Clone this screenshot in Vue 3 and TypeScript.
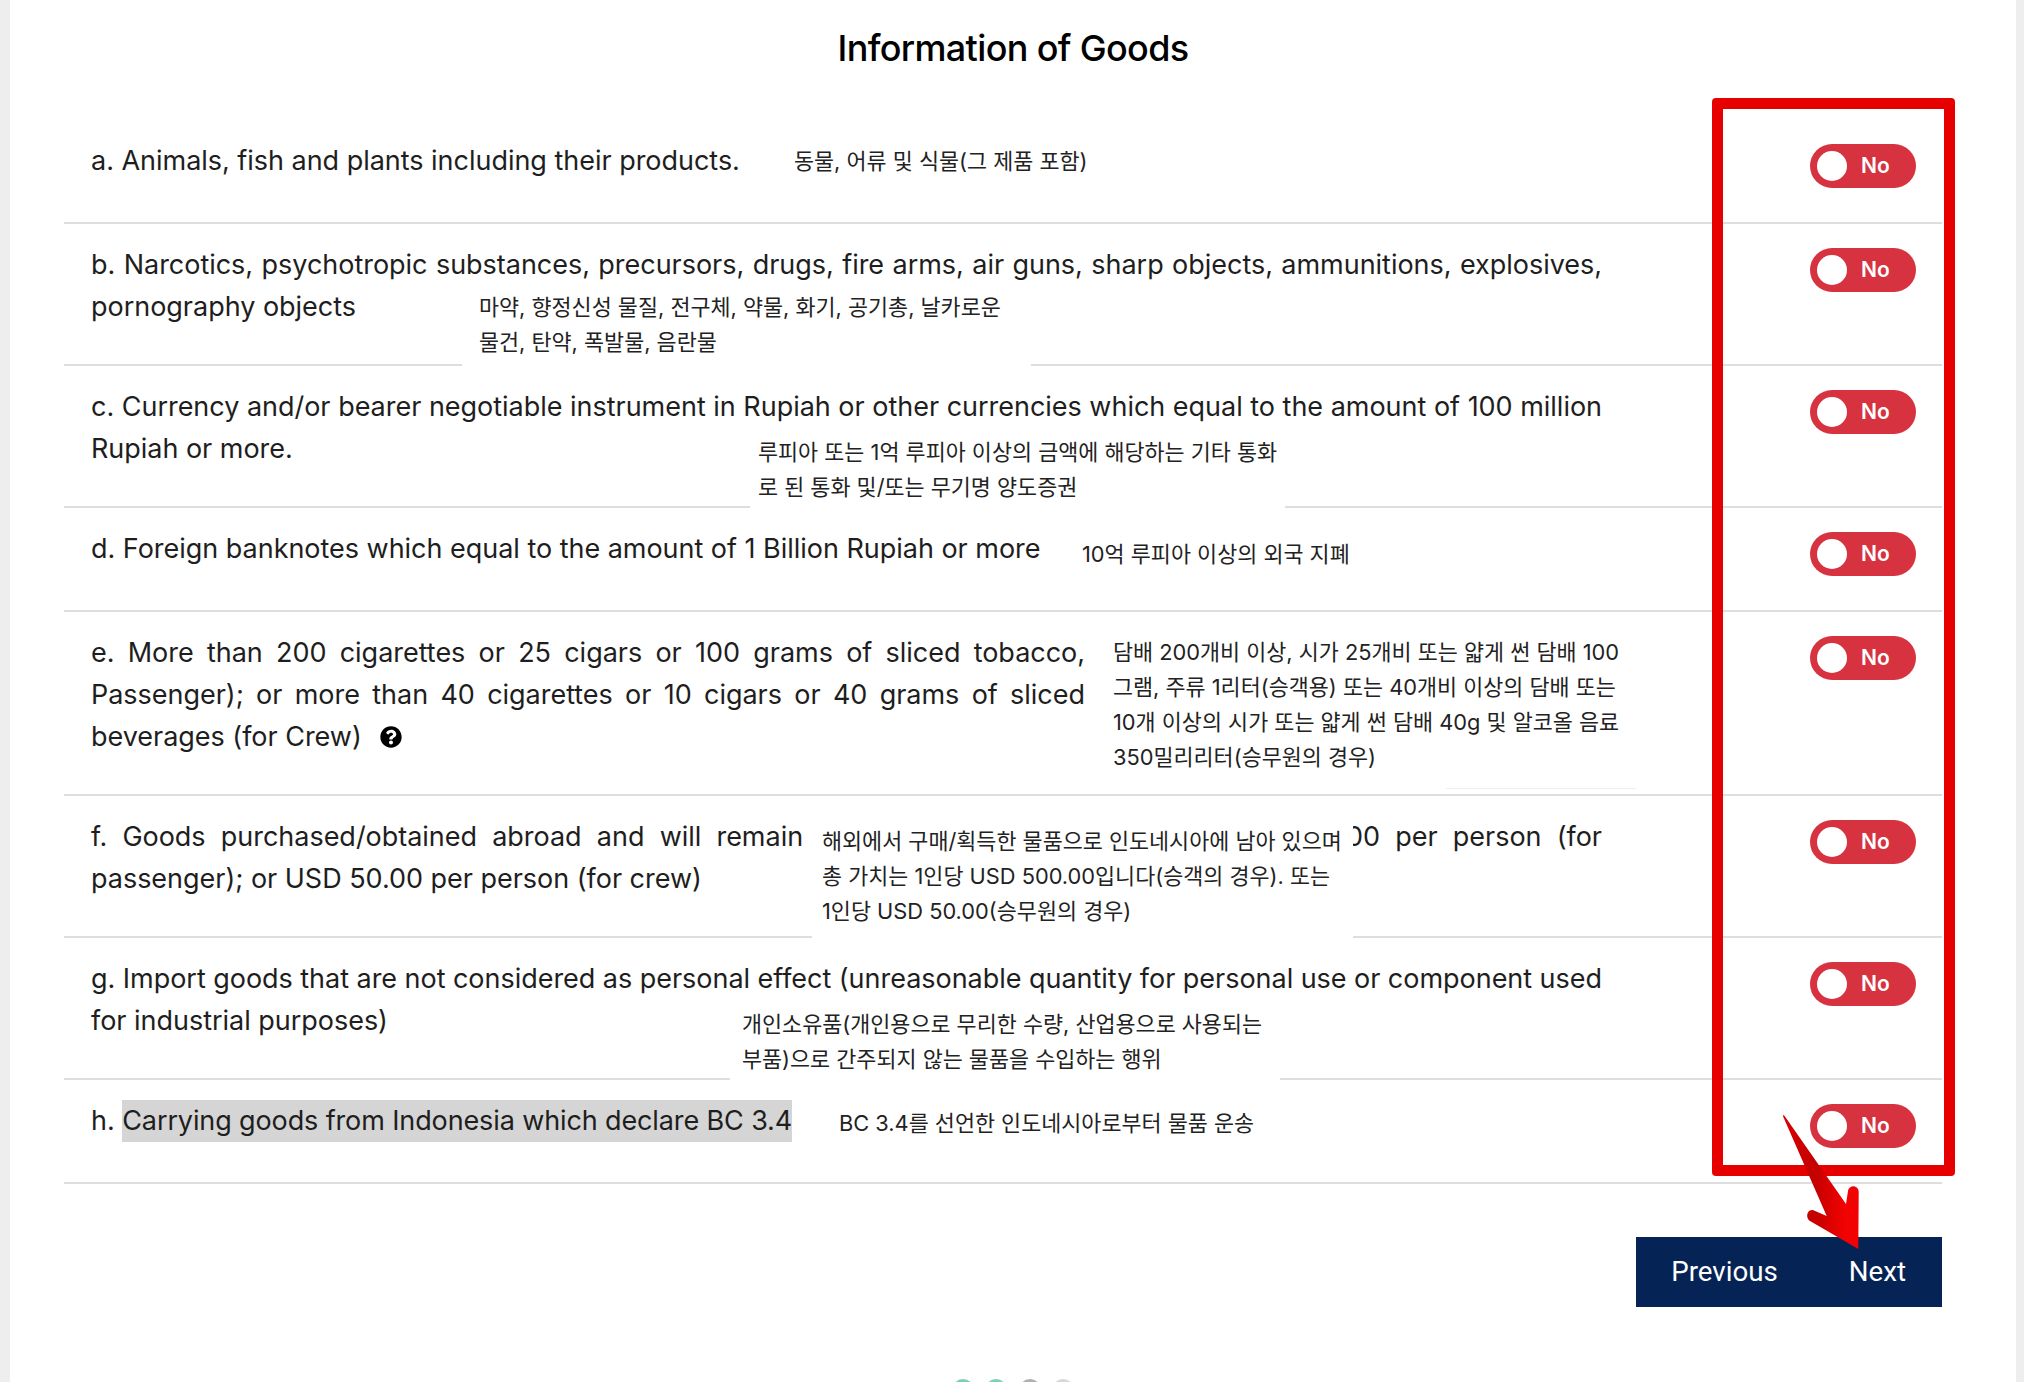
<script setup lang="ts">
interface Note {
  x: number
  y: number
  w: number
  h: number
  padX: number
  padY: number
  lines: string[]
}
interface Row {
  key: string
  top: number
  lines: string[]
  width?: number
  lead?: string
  mark?: string
  help?: boolean
  edge?: boolean
  note: Note
}

const rows: Row[] = [
  {
    key: 'a', top: 119.5,
    lines: ['a. Animals, fish and plants including their products.'],
    note: { x: 794, y: 143.5, w: 320, h: 35, padX: 0, padY: 0, lines: ['동물, 어류 및 식물(그 제품 포함)'] },
  },
  {
    key: 'b', top: 223.5,
    lines: ['b. Narcotics, psychotropic substances, precursors, drugs, fire arms, air guns, sharp objects, ammunitions, explosives,', 'pornography objects'],
    note: { x: 462, y: 285, w: 569, h: 82, padX: 17, padY: 4.5, lines: ['마약, 향정신성 물질, 전구체, 약물, 화기, 공기총, 날카로운', '물건, 탄약, 폭발물, 음란물'] },
  },
  {
    key: 'c', top: 365.5,
    lines: ['c. Currency and/or bearer negotiable instrument in Rupiah or other currencies which equal to the amount of 100 million', 'Rupiah or more.'],
    note: { x: 750, y: 431, w: 535, h: 78, padX: 8, padY: 3.5, lines: ['루피아 또는 1억 루피아 이상의 금액에 해당하는 기타 통화', '로 된 통화 및/또는 무기명 양도증권'] },
  },
  {
    key: 'd', top: 507.5,
    lines: ['d. Foreign banknotes which equal to the amount of 1 Billion Rupiah or more'],
    note: { x: 1082, y: 536.5, w: 320, h: 35, padX: 0, padY: 0, lines: ['10억 루피아 이상의 외국 지폐'] },
  },
  {
    key: 'e', top: 611.5, width: 994, help: true, edge: true,
    lines: ['e. More than 200 cigarettes or 25 cigars or 100 grams of sliced tobacco,', 'Passenger); or more than 40 cigarettes or 10 cigars or 40 grams of sliced', 'beverages (for Crew)'],
    note: { x: 1100, y: 630, w: 540, h: 158, padX: 13, padY: 4.5, lines: ['담배 200개비 이상, 시가 25개비 또는 얇게 썬 담배 100', '그램, 주류 1리터(승객용) 또는 40개비 이상의 담배 또는', '10개 이상의 시가 또는 얇게 썬 담배 40g 및 알코올 음료', '350밀리리터(승무원의 경우)'] },
  },
  {
    key: 'f', top: 796,
    lines: ['f. Goods purchased/obtained abroad and will remain in Indonesia with total value USD 500.00 per person (for', 'passenger); or USD 50.00 per person (for crew)'],
    note: { x: 812, y: 818, w: 541, h: 120, padX: 10, padY: 6.5, lines: ['해외에서 구매/획득한 물품으로 인도네시아에 남아 있으며', '총 가치는 1인당 USD 500.00입니다(승객의 경우). 또는', '1인당 USD 50.00(승무원의 경우)'] },
  },
  {
    key: 'g', top: 938,
    lines: ['g. Import goods that are not considered as personal effect (unreasonable quantity for personal use or component used', 'for industrial purposes)'],
    note: { x: 730, y: 1003, w: 550, h: 78, padX: 12, padY: 4.5, lines: ['개인소유품(개인용으로 무리한 수량, 산업용으로 사용되는', '부품)으로 간주되지 않는 물품을 수입하는 행위'] },
  },
  {
    key: 'h', top: 1080,
    lines: [],
    lead: 'h. ',
    mark: 'Carrying goods from Indonesia which declare BC 3.4',
    note: { x: 839, y: 1106.5, w: 440, h: 35, padX: 0, padY: 0, lines: ['BC 3.4를 선언한 인도네시아로부터 물품 운송'] },
  },
]

const ROW_LEFT = 64

function noteStyle(row: Row) {
  const n = row.note
  return {
    left: `${n.x - ROW_LEFT}px`,
    top: `${n.y - row.top}px`,
    width: `${n.w}px`,
    height: `${n.h}px`,
    padding: `${n.padY}px 0 0 ${n.padX}px`,
  }
}
</script>

<template>
  <div class="page">
    <main class="panel">
      <h1 class="title">Information of Goods</h1>
      <section class="list">
        <div v-for="row in rows" :key="row.key" class="row">
          <div class="copy" :style="row.width ? { width: `${row.width}px` } : undefined">
            <div
              v-for="(line, i) in row.lines"
              :key="i"
              class="line"
              :class="{ full: i < row.lines.length - 1 }"
            >{{ line }}<svg v-if="row.help && i === row.lines.length - 1" class="help" viewBox="0 0 512 512"><path d="M504 256c0 136.997-111.043 248-248 248S8 392.997 8 256C8 119.083 119.043 8 256 8s248 111.083 248 248zM262.655 90c-54.497 0-89.255 22.957-116.549 63.758-3.536 5.286-2.353 12.415 2.715 16.258l34.699 26.31c5.205 3.947 12.621 3.008 16.665-2.122 17.864-22.658 30.113-35.797 57.303-35.797 20.429 0 45.698 13.148 45.698 32.958 0 14.976-12.363 22.667-32.534 33.976C247.128 238.528 216 254.941 216 296v4c0 6.627 5.373 12 12 12h56c6.627 0 12-5.373 12-12v-1.333c0-28.462 83.186-29.647 83.186-106.667 0-58.002-60.165-102-116.531-102zM256 338c-25.365 0-46 20.635-46 46 0 25.364 20.635 46 46 46s46-20.636 46-46c0-25.365-20.635-46-46-46z" /></svg></div>
            <div v-if="row.mark" class="line">{{ row.lead }}<span class="mark">{{ row.mark }}</span></div>
          </div>
          <div class="toggle">
            <span class="knob"></span>
            <span class="toggle-label">No</span>
          </div>
          <div class="note" :style="noteStyle(row)">
            <span v-for="(t, i) in row.note.lines" :key="i" class="note-line">{{ t }}</span>
          </div>
          <i v-if="row.edge" class="edge"></i>
        </div>
      </section>
      <div class="actions">
        <div class="btn-group">
          <button class="btn" type="button">Previous</button>
          <button class="btn" type="button">Next</button>
        </div>
      </div>
      <div class="dots">
        <span class="dot done"></span>
        <span class="dot done"></span>
        <span class="dot mid"></span>
        <span class="dot idle"></span>
      </div>
    </main>

    <div class="frame"></div>

    <svg class="arrow" viewBox="0 0 80 140" aria-hidden="true">
      <defs>
        <linearGradient id="arrow-fill" x1="0" y1="0" x2="1" y2="0">
          <stop offset="0" stop-color="#d80000" />
          <stop offset="0.42" stop-color="#c40000" />
          <stop offset="0.82" stop-color="#f20202" />
        </linearGradient>
      </defs>
      <path
        d="M0.8 0.8 C1.2 0 2 0.2 2.6 1 L64 89 L66 76 C66.5 72.5 71 70 74 72 C76 73 76.7 75 76.7 77 L76.3 134 L28 106 C25 104 24.5 100 26 97.5 C27.5 95 30 94.5 32 95.5 L44.7 101 Z"
        fill="url(#arrow-fill)"
      />
    </svg>
  </div>
</template>

<style scoped>
.page {
  position: relative;
  width: 2024px;
  height: 1382px;
  overflow: hidden;
  background: #eeeeee;
  padding: 0 8px 0 10px;
  box-sizing: border-box;
  font-family: Inter, "Noto Sans CJK KR", sans-serif;
  color: #1e1e1e;
}
.panel {
  height: 100%;
  background: #ffffff;
  padding: 0 74px 0 54px;
  box-sizing: border-box;
}
.title {
  margin: 0 -74px 0 -54px;
  height: 119.5px;
  padding-top: 26px;
  box-sizing: border-box;
  font-size: 36px;
  line-height: 44px;
  font-weight: 450;
  letter-spacing: -0.65px;
  text-align: center;
  color: #000000;
}
.list {
  display: flex;
  flex-direction: column;
}
.row {
  position: relative;
  display: flex;
  justify-content: space-between;
  align-items: flex-start;
  min-height: 104px;
  box-sizing: border-box;
  padding: 20px 26px 35.2px 27px;
  border-bottom: 2px solid #dedede;
}
.copy {
  width: 1511px;
  font-size: 27px;
  line-height: 42.4px;
  letter-spacing: -0.025px;
}
.line {
  white-space: nowrap;
}
.line.full {
  white-space: normal;
  word-spacing: -1.5px;
  text-align: justify;
  text-align-last: justify;
}
.mark {
  display: inline-block;
  letter-spacing: -0.12px;
  background: #d5d5d5;
}
.help {
  width: 22px;
  height: 22px;
  margin-left: 18px;
  vertical-align: -2px;
  fill: #000000;
}
.toggle {
  display: flex;
  align-items: center;
  flex: none;
  width: 106px;
  height: 44px;
  margin: 4px 0 -4px;
  padding-left: 7px;
  box-sizing: border-box;
  border-radius: 22px;
  background: #d7323f;
}
.knob {
  width: 30px;
  height: 30px;
  border-radius: 50%;
  background: #ffffff;
}
.toggle-label {
  margin-left: 14px;
  font-size: 21px;
  font-weight: 600;
  color: #ffffff;
}
.note {
  position: absolute;
  box-sizing: border-box;
  background: #ffffff;
}
.note-line {
  display: block;
  font-size: 21.8px;
  line-height: 35px;
  white-space: nowrap;
  color: #222222;
}
.edge {
  position: absolute;
  left: 1382px;
  top: 176.5px;
  width: 190px;
  height: 1px;
  background: #eeeeee;
}
.actions {
  display: flex;
  justify-content: flex-end;
  margin-top: 53px;
}
.btn-group {
  display: flex;
  background: #052455;
}
.btn {
  height: 70px;
  padding: 0 36px 0 35px;
  border: 0;
  background: transparent;
  color: #ffffff;
  font-family: Roboto, sans-serif;
  font-size: 27.7px;
  font-weight: 400;
}
.dots {
  display: flex;
  justify-content: center;
  gap: 11.5px;
  margin: 72px -74px 0 -54px;
}
.dot {
  width: 22px;
  height: 22px;
  border-radius: 50%;
}
.dot.done {
  background: #7fd0b0;
}
.dot.mid {
  background: #b0b0b0;
}
.dot.idle {
  background: #d8d8d8;
}
.frame {
  position: absolute;
  left: 1712px;
  top: 98px;
  width: 243px;
  height: 1078px;
  box-sizing: border-box;
  border: 11px solid #e60000;
  border-radius: 4px;
}
.arrow {
  position: absolute;
  left: 1782px;
  top: 1115px;
  width: 80px;
  height: 140px;
}
</style>
